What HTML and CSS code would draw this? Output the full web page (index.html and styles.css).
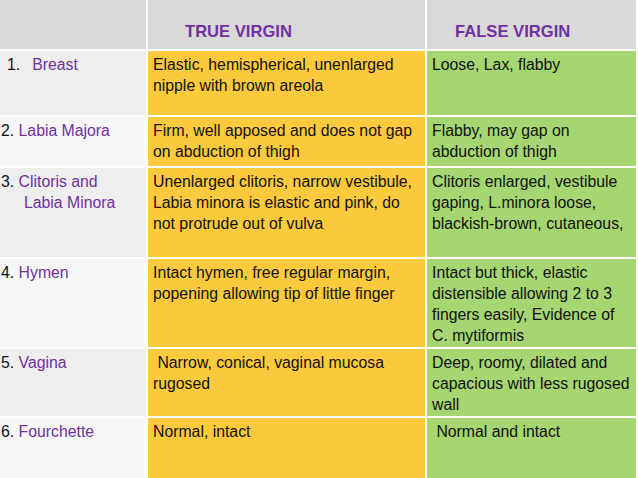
FILE: index.html
```html
<!DOCTYPE html>
<html>
<head>
<meta charset="utf-8">
<link rel="stylesheet" href="styles.css">
</head>
<body>
<div class="table">
  <div class="cell head"></div>
  <div class="cell head head-true">TRUE VIRGIN</div>
  <div class="cell head head-false">FALSE VIRGIN</div>

  <div class="cell label odd"><span class="num">1.</span><span class="name first">Breast</span></div>
  <div class="cell yellow">Elastic, hemispherical, unenlarged nipple with brown areola</div>
  <div class="cell green">Loose, Lax, flabby</div>

  <div class="cell label even"><span class="num">2.</span> <span class="name">Labia Majora</span></div>
  <div class="cell yellow">Firm, well apposed and does not gap on abduction of thigh</div>
  <div class="cell green">Flabby, may gap on<br>abduction of thigh</div>

  <div class="cell label odd"><span class="num">3.</span> <span class="name">Clitoris and<br><span class="indent">Labia Minora</span></span></div>
  <div class="cell yellow">Unenlarged clitoris, narrow vestibule, Labia minora is elastic and pink, do not protrude out of vulva</div>
  <div class="cell green">Clitoris enlarged, vestibule gaping, L.minora loose, blackish-brown, cutaneous,</div>

  <div class="cell label even"><span class="num">4.</span> <span class="name">Hymen</span></div>
  <div class="cell yellow">Intact hymen, free regular margin, popening allowing tip of little finger</div>
  <div class="cell green">Intact but thick, elastic distensible allowing 2 to 3 fingers easily, Evidence of C. mytiformis</div>

  <div class="cell label odd"><span class="num">5.</span> <span class="name">Vagina</span></div>
  <div class="cell yellow">&nbsp;Narrow, conical, vaginal mucosa rugosed</div>
  <div class="cell green">Deep, roomy, dilated and capacious with less rugosed wall</div>

  <div class="cell label even"><span class="num">6.</span> <span class="name">Fourchette</span></div>
  <div class="cell yellow">Normal, intact</div>
  <div class="cell green">&nbsp;Normal and intact</div>
</div>
</body>
</html>
```
FILE: styles.css
```css
html, body {
  margin: 0;
  padding: 0;
  background: #ffffff;
}
body {
  width: 638px;
  height: 478px;
  overflow: hidden;
  font-family: "Liberation Sans", sans-serif;
  font-size: 15.8px;
  line-height: 21px;
  color: #111111;
}
.table {
  display: grid;
  grid-template-columns: 146px 277px 209px;
  grid-template-rows: 49px 64px 49px 89px 88px 67px 60px;
  column-gap: 2px;
  row-gap: 2px;
  width: 636px;
}
.cell {
  padding: 3px 4px 0 5px;
  box-sizing: border-box;
}
.head {
  background: #d9d9d9;
  color: #7030a0;
  font-weight: bold;
  font-size: 16.6px;
  padding-top: 21px;
}
.head-true {
  padding-left: 37px;
}
.head-false {
  padding-left: 28px;
}
.label {
  padding-left: 1px;
}
.odd {
  background: #eeeeee;
}
.even {
  background: #f7f7f7;
}
.num {
  color: #111111;
}
.name {
  color: #7030a0;
}
.name.first {
  margin-left: 12px;
}
.label:nth-child(4) .num {
  margin-left: 6px;
}
.indent {
  padding-left: 23px;
}
.yellow {
  background: #fdc93d;
}
.green {
  background: #a5d672;
}
```
